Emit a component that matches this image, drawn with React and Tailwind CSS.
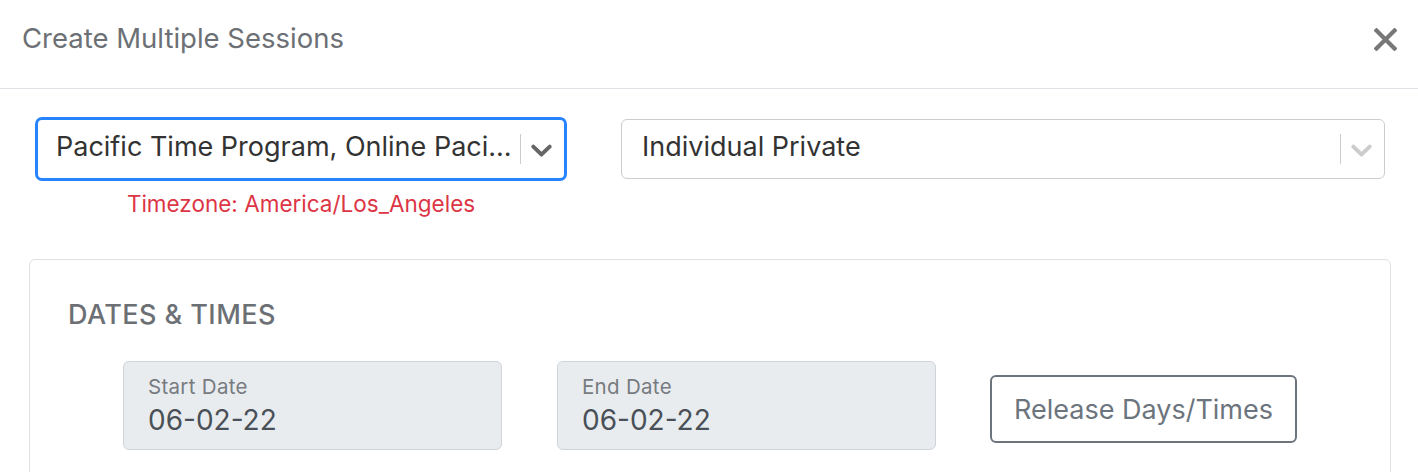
import React from 'react'

const FONT = { fontFamily: 'Inter, "Noto Sans", sans-serif' }

function Chevron({ color }) {
  return (
    <svg width="35" height="35" viewBox="0 0 20 20" fill={color} className="shrink-0">
      <path d="M4.516 7.548c0.436-0.446 1.043-0.481 1.576 0l3.908 3.747 3.908-3.747c0.533-0.481 1.141-0.446 1.574 0 0.436 0.445 0.408 1.197 0 1.615-0.406 0.418-4.695 4.502-4.695 4.502-0.217 0.223-0.502 0.335-0.787 0.335s-0.57-0.112-0.789-0.335c0 0-4.287-4.084-4.695-4.502s-0.436-1.17 0-1.615z" />
    </svg>
  )
}

function Select({ value, focused, className }) {
  return (
    <div
      className={
        'flex items-center bg-white ' +
        (focused
          ? 'h-[64px] border-[3px] border-[#2684ff] rounded-[7px] pl-[18px] pr-[5px]'
          : 'h-[60px] border border-[#cccccc] rounded-[6px] pl-[20px] pr-[5px]') +
        ' ' + className
      }
    >
      <div className="flex-1 min-w-0 whitespace-nowrap overflow-hidden text-[27px] leading-[33px] text-[#333333] pb-[5px]">
        {value}
      </div>
      <div className="w-px h-[30px] bg-[#cccccc] mx-[3px]" />
      <Chevron color={focused ? '#666666' : '#cccccc'} />
    </div>
  )
}

function DateBox({ label, value }) {
  return (
    <div className="w-[379px] h-[89px] bg-[#e9ecef] border border-[#ced4da] rounded-[6px] pl-[24px] pt-[13px]">
      <div className="text-[20.5px] leading-[24px] tracking-[0.3px] text-[#777b80]">{label}</div>
      <div className="mt-[4px] text-[28px] leading-[34px] text-[#495057]">{value}</div>
    </div>
  )
}

export default function App() {
  return (
    <div className="w-[1418px] h-[472px] bg-white overflow-hidden" style={FONT}>
      <div className="h-[89px] border-b border-[#dee2e6] flex items-start justify-between pl-[22px] pr-[21px]">
        <div className="pt-[22px] text-[27.5px] leading-[33px] text-[#6c7075]">Create Multiple Sessions</div>
        <button className="mt-[28px]">
          <svg width="23" height="23" viewBox="0 0 23 23">
            <path d="M2.5 2.5 L20.5 20.5 M20.5 2.5 L2.5 20.5" stroke="#777777" strokeWidth="4.2" strokeLinecap="square" />
          </svg>
        </button>
      </div>

      <div className="pt-[28px]">
        <div className="flex items-center pl-[35px]">
          <div className="w-[532px] shrink-0">
            <Select focused value="Pacific Time Program, Online Paci..." />
          </div>
          <div className="w-[764px] ml-[54px] shrink-0">
            <Select value="Individual Private" />
          </div>
        </div>
        <div className="w-[532px] ml-[35px] mt-[9px] text-center text-[22.5px] leading-[27px] text-[#dc3545]">
          Timezone: America/Los_Angeles
        </div>

        <div className="mt-[42px] mx-[29px] w-[1362px] border border-[#e0e0e0] rounded-[6px] pt-[39px] pl-[38px] pb-[40px]">
          <div className="text-[27px] leading-[31px] tracking-[0.45px] font-medium text-[#6c7075]">DATES &amp; TIMES</div>
          <div className="flex items-start mt-[31px] pl-[55px]">
            <DateBox label="Start Date" value="06-02-22" />
            <div className="ml-[55px]">
              <DateBox label="End Date" value="06-02-22" />
            </div>
            <button className="ml-[54px] mt-[14px] w-[307px] h-[68px] border-2 border-[#6c757d] rounded-[6px] text-[27px] leading-[33px] text-[#6c757d] flex items-center justify-center">
              Release Days/Times
            </button>
          </div>
        </div>
      </div>
    </div>
  )
}
